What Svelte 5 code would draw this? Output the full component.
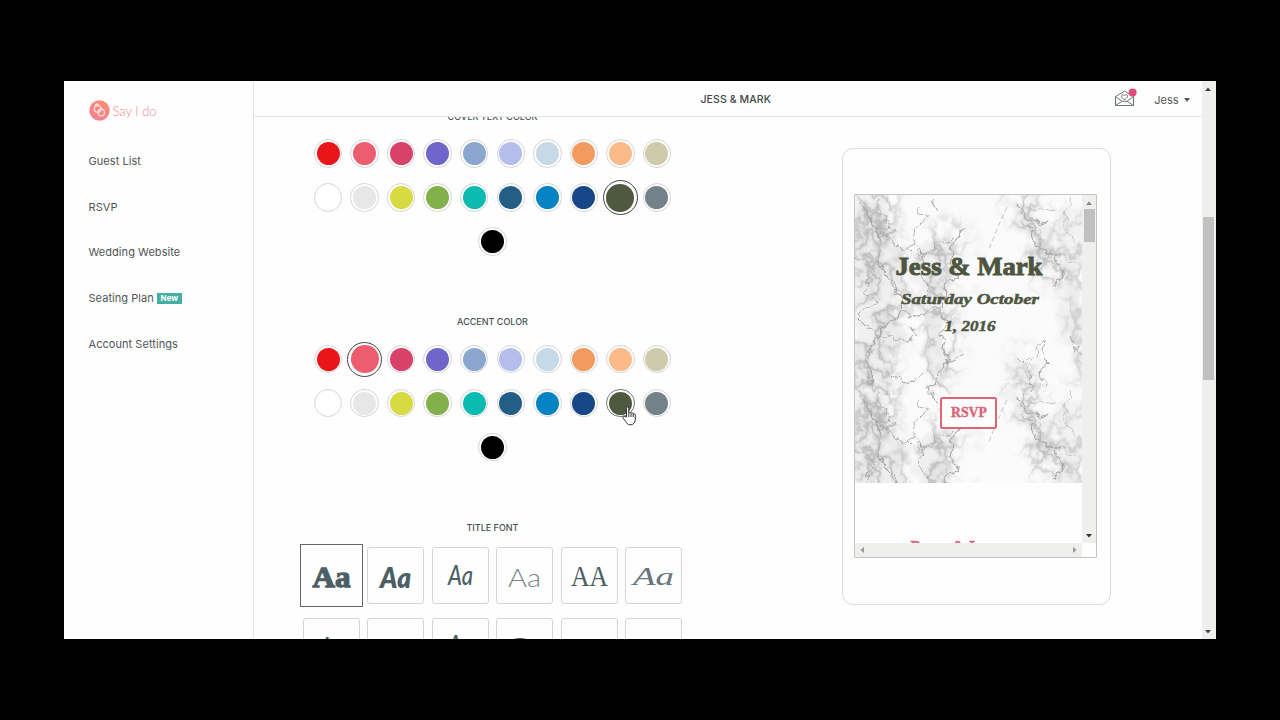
<script>
  const colors = [
    '#ea1518', '#ed5d70', '#d84268', '#6e66c8', '#8ba6cf', '#b4bdec', '#c6d9e6', '#f39a61', '#fbba87', '#cfcbaa',
    '#ffffff', '#e7e7e7', '#d8da42', '#84b04b', '#0bbab1', '#225e86', '#0583c3', '#184788', '#4e5940', '#738189',
    '#000000'
  ];
  const palettes = [
    { title: 'COVER TEXT COLOR', selected: 18, hover: -1 },
    { title: 'ACCENT COLOR', selected: 1, hover: 18 }
  ];
  const nav = [
    { label: 'Guest List' },
    { label: 'RSVP' },
    { label: 'Wedding Website' },
    { label: 'Seating Plan', badge: 'New' },
    { label: 'Account Settings' }
  ];
  const fonts = [
    { text: 'Aa', cls: 'deco', w: 38, y: 39, selected: true },
    { text: 'Aa', cls: 'brush', w: 31, y: 40 },
    { text: 'Aa', cls: 'hand', w: 25, y: 37 },
    { text: 'Aa', cls: 'thin', w: 33, y: 39 },
    { text: 'AA', cls: 'caps', w: 37, y: 38 },
    { text: 'Aa', cls: 'script', w: 41, y: 37 },
    { text: 'Aa', cls: 'hand', w: 24, y: 38 },
    { text: 'Aa', cls: 'script', w: 28, y: 37 },
    { text: 'Aa', cls: 'hand', w: 26, y: 36 },
    { text: 'Ca', cls: 'caps', w: 32, y: 38 },
    { text: 'Aa', cls: 'thin', w: 32, y: 42 },
    { text: 'Aa', cls: 'thin', w: 32, y: 42 }
  ];
</script>

{#snippet arrow(dir, color)}
  <svg class="arrow {dir}" width="6" height="4" viewBox="0 0 6 4"><path d="M0 4 3 .4 6 4Z" fill={color} /></svg>
{/snippet}

<div class="stage">
  <div class="app">
    <aside>
      <div class="logo">
        <svg width="21" height="21" viewBox="0 0 21 21">
          <defs>
            <linearGradient id="lg" x1="0" y1="1" x2="1" y2="0">
              <stop offset="0" stop-color="#f57fa0" /><stop offset="1" stop-color="#ff8d6a" />
            </linearGradient>
          </defs>
          <circle cx="10.5" cy="10.5" r="10.2" fill="url(#lg)" />
          <g fill="none" stroke="#ffe3dc" stroke-width="1.2">
            <circle cx="8.7" cy="9" r="3.3" />
            <circle cx="12.2" cy="12.4" r="3.3" />
            <path d="M6.800 6 6.400 4.800 8 4 9.300 4.600 9.200 5.800" />
          </g>
        </svg>
        <span>Say I do</span>
      </div>
      <nav>
        {#each nav as n}
          <a>{n.label}{#if n.badge}<b>{n.badge}</b>{/if}</a>
        {/each}
      </nav>
    </aside>

    <main>
      <header>
        <h1>JESS &amp; MARK</h1>
        <div class="user">
          <svg width="24" height="20" viewBox="0 0 24 20">
            <g fill="none" stroke="#6f7777" stroke-width="1">
              <path d="M1.5 8.5V17.5H19.5V8.5L10.5 3.2ZM1.5 8.5l6.500 4.800h5l6.500-4.800M1.5 17.5l6.500-4.200M19.5 17.5l-6.500-4.200" />
              <path d="M10.5 11.800C7.600 9.700 7.300 8.700 7.500 7.700c.4-1.400 2.300-1.400 3 0c.7-1.400 2.600-1.400 3 0c.2 1-.1 2-3 4.100Z" />
            </g>
            <circle cx="18.600" cy="4.500" r="4" fill="#e24d7b" />
          </svg>
          <span>Jess</span>
          <i></i>
        </div>
      </header>

      <div class="body">
        <section class="options">
          {#each palettes as p}
            <div class="group">
              <h2>{p.title}</h2>
              <div class="swatches">
                {#each colors as c, i}
                  <div class="cell">
                    <div class="swatch" class:selected={i === p.selected} class:hover={i === p.hover}>
                      <span style="background:{c}"></span>
                      {#if i === p.hover}
                        <svg class="cursor" width="15" height="20" viewBox="0 0 15 20">
                          <path d="M4.500 11V2.200c0-1.700 2.300-1.700 2.300 0V7c.5-.9 2-.7 2.200.3c.6-.8 2-.5 2.200.6c.8-.6 2.100-.1 2.100 1.200v4c0 3-1.500 5.700-4.800 5.700c-3 0-3.800-1.500-4.900-3.500L1 11.900c-.8-1.500.8-2.200 1.800-1.200ZM6.800 7v4M9 7.500V11M11.200 8v3" fill="#fff" stroke="#333" stroke-width="1" />
                        </svg>
                      {/if}
                    </div>
                  </div>
                {/each}
              </div>
            </div>
          {/each}
          <div class="group">
            <h2>TITLE FONT</h2>
            <div class="fonts">
              {#each fonts as f}
                <div class="card" class:selected={f.selected}>
                  <svg width="55" height="55" viewBox="0 0 55 55">
                    <text class={f.cls} x="27.500" y={f.y} text-anchor="middle" textLength={f.w} lengthAdjust="spacingAndGlyphs">{f.text}</text>
                  </svg>
                </div>
              {/each}
            </div>
          </div>
        </section>

        <section class="phone">
          <div class="screen">
            <svg class="page" width="227" height="348" viewBox="0 0 227 348">
              <defs>
                <filter id="rough" x="-10%" y="-10%" width="120%" height="120%">
                  <feTurbulence type="fractalNoise" baseFrequency=".07" numOctaves="3" seed="8" result="n" />
                  <feDisplacementMap in="SourceGraphic" in2="n" scale="18" xChannelSelector="R" yChannelSelector="G" />
                  <feGaussianBlur stdDeviation=".55" />
                </filter>
                <filter id="cloud" x="-10%" y="-10%" width="120%" height="120%">
                  <feTurbulence type="fractalNoise" baseFrequency=".06" numOctaves="4" seed="3" result="n" />
                  <feDisplacementMap in="SourceGraphic" in2="n" scale="34" xChannelSelector="R" yChannelSelector="G" />
                  <feGaussianBlur stdDeviation="1.500" />
                </filter>
                <filter id="veins" x="0" y="0" width="100%" height="100%" color-interpolation-filters="sRGB">
                  <feTurbulence type="fractalNoise" baseFrequency=".04 .034" numOctaves="4" seed="21" />
                  <feColorMatrix values="0 0 0 0 .6  0 0 0 0 .6  0 0 0 0 .6  1 0 0 0 0" />
                  <feComponentTransfer>
                    <feFuncA type="table" tableValues="0 0 0 0 0 0 .02 .06 .1 .25 .6 .2 .06 0 0 0 0 0 0 0 0" />
                  </feComponentTransfer>
                  <feGaussianBlur stdDeviation=".4" />
                  <feComposite in2="SourceAlpha" operator="in" />
                </filter>
                <filter id="soft" x="-50%" y="-50%" width="200%" height="200%"><feGaussianBlur stdDeviation="9" /></filter>
                <mask id="bands" maskUnits="userSpaceOnUse" x="0" y="-5" width="227" height="205">
                  <g filter="url(#soft)" fill="none" stroke="#fff" stroke-width="34">
                    <path d="M20-10 18 60 30 100 14 150 20 205" stroke-width="46" />
                    <path d="M102 30 75 70 80 110 88 150 78 205" />
                    <path d="M160-10 185 45 195 90" />
                    <path d="M222 20V190M165 150 172 205" stroke-width="16" />
                  </g>
                </mask>
                <clipPath id="hero"><path d="M0 0H227V288H0Z" /></clipPath>
                <g id="tile">
                  <g filter="url(#cloud)" fill="#f0f0f0">
                    <path d="M0 0H28L34 35 52 62 40 110 50 150 22 195H0Z" />
                    <path d="M62 60 104 25 94 66 86 120 98 165 76 195 70 130 52 96Z" />
                    <path d="M150 0 196 30 200 62 180 60 160 30Z" />
                    <path d="M204 10 227 10V185L206 130Z" opacity=".8" />
                    <path d="M150 158 172 165 176 195 160 195Z" />
                    <path d="M110 30 130 40 128 60ZM108 90 140 100 128 110Z" opacity=".6" />
                  </g>
                  <g filter="url(#cloud)" fill="none" stroke="#c8c8c8" stroke-width="6" opacity=".6">
                    <path d="M30 28 26 46 44 46M36 68 56 66M22 120 48 128M12 174 28 182M82 174 94 182M182 50 194 36M94 62 100 46" />
                  </g>
                  <path d="M0-5H227V200H0Z" filter="url(#veins)" mask="url(#bands)" />
                  <g filter="url(#rough)" transform="translate(1 1)" fill="none" stroke="#a9a9a9" stroke-width="1">
                    <path d="M5 8 18 30 26 42 20 62 32 78 44 100 46 118 28 132 12 158 14 190" stroke-width="1.500" />
                    <path d="M60 10 68 22 54 50 42 52 28 40 38 32 26 22 26 5M54 50 66 62 62 80 74 90 72 108" />
                    <path d="M4 60 18 75 8 95 20 108 4 118 14 135 36 145 60 140 50 125M32 175 48 188 66 182" />
                    <path d="M108 32 98 48 92 62 100 80 88 96 84 112 90 132 84 150 94 165 80 180 72 195" stroke-width="1.300" />
                    <path d="M62 62 82 50 96 40M84 112 64 122 44 118M94 165 112 158M76 0 82 14" />
                    <path d="M158 4 170 22 184 30 192 24M166 26 180 44 190 58 202 60 206 78 196 92" stroke-width="1.300" />
                    <path d="M172 10 200 14M184 44 186 30M204 60 216 64M216 0 208 22 220 50" opacity=".6" />
                    <path d="M172 165 190 145 186 195M160 160 176 176 172 195M216 155 226 148M214 140 224 162" />
                  </g>
                  <path d="M152 12 142 34 134 54" fill="none" stroke="#b8b8b8" stroke-width=".8" stroke-dasharray="5 3" />
                </g>
              </defs>
              <path d="M0 0H227V288H0Z" fill="#fafbfa" />
              <g clip-path="url(#hero)">
                <use href="#tile" />
                <use href="#tile" y="193" />
              </g>
              <g class="invite" text-anchor="middle">
                <text x="114" y="79.500" font-size="26" textLength="147" lengthAdjust="spacingAndGlyphs">Jess &amp; Mark</text>
                <text class="it" x="115" y="109" font-size="15" textLength="138" lengthAdjust="spacingAndGlyphs">Saturday October</text>
                <text class="it" x="115" y="135.500" font-size="15" textLength="51" lengthAdjust="spacingAndGlyphs">1, 2016</text>
                <rect x="86" y="203" width="55" height="30" rx="1.500" />
                <text class="rsvp" x="114" y="221.500" font-size="14" textLength="36" lengthAdjust="spacingAndGlyphs">RSVP</text>
                <text class="rsvp" x="94" y="361" font-size="23" textLength="77" lengthAdjust="spacingAndGlyphs">Bears &amp; Lo</text>
              </g>
            </svg>
            <div class="vbar">{@render arrow('up', '#888')}<span></span>{@render arrow('down', '#333')}</div>
            <div class="hbar">{@render arrow('left', '#999')}{@render arrow('right', '#999')}</div>
          </div>
        </section>
      </div>
    </main>

    <div class="scroll">{@render arrow('up', '#444')}<span></span>{@render arrow('down', '#444')}</div>
  </div>
</div>

<style>
  :global(body) { background: #000; }
  .stage { box-sizing: border-box; width: 1280px; height: 720px; padding: 81px 64px; background: #000; overflow: hidden; font-family: Inter, 'Open Sans', sans-serif; color: #4f5656; }
  .app { display: grid; grid-template-columns: 190px 1fr 14.500px; height: 558px; background: #fefefe; overflow: hidden; }
  aside { box-sizing: border-box; border-right: 1px solid #e4e4e4; padding: 19px 0 0 24.500px; }
  .logo { display: flex; align-items: center; gap: 3px; height: 21px; font-family: Lato, sans-serif; font-weight: 300; font-size: 13px; color: #f18b8b; white-space: nowrap; }
  nav { display: flex; flex-direction: column; margin-top: 17px; }
  nav a { display: flex; align-items: center; height: 45.700px; font-size: 11px; letter-spacing: .05px; white-space: nowrap; }
  nav b { margin: 2px 0 0 3px; width: 25px; height: 11px; line-height: 11px; background: #45b0a2; color: #fff; font-size: 8px; letter-spacing: 0; text-align: center; font-weight: 700; }
  main { display: flex; flex-direction: column; min-height: 0; min-width: 0; }
  header { box-sizing: border-box; display: grid; grid-template-columns: 1fr auto 1fr; align-items: center; height: 36px; flex: none; border-bottom: 1px solid #e6e6e6; padding: 2px 12px 0 28px; }
  h1 { grid-column: 2; margin: 0; font-size: 10.500px; letter-spacing: .1px; font-weight: 500; color: #3f4747; }
  .user { display: flex; justify-content: flex-end; align-items: center; font-size: 11px; }
  .user svg { margin: -3px 16px 0 0; }
  .user i { margin: 1px 0 0 5px; border: 3.500px solid transparent; border-top: 4px solid #555; border-bottom: 0; }
  .body { display: flex; align-items: flex-start; flex: 1; min-height: 0; overflow: hidden; }
  .options { width: 477px; flex: none; margin-top: -8.500px; display: flex; flex-direction: column; align-items: center; }
  .group { height: 205.700px; display: flex; flex-direction: column; align-items: center; }
  h2 { margin: 0; height: 15px; line-height: 15px; font-size: 9px; font-weight: 500; white-space: nowrap; color: #465252; }
  .swatches { display: flex; flex-wrap: wrap; justify-content: center; width: 366px; margin-top: 8px; }
  .cell { width: 36.550px; height: 44px; display: grid; place-items: center; }
  .swatch { position: relative; box-sizing: border-box; width: 28.500px; height: 28.500px; border: 1px solid #d6d6d6; border-radius: 50%; display: grid; place-items: center; }
  .swatch span { width: 23px; height: 23px; border-radius: 50%; }
  .swatch.hover { border-color: #777; }
  .swatch.selected { width: 35px; height: 35px; margin: -4px; border: 1.500px solid #444; }
  .swatch.selected span { width: 28px; height: 28px; }
  .cursor { position: absolute; left: 15px; top: 16px; }
  .fonts { display: grid; grid-template-columns: repeat(6, 57px); gap: 14px 7.600px; margin-top: 12.500px; }
  .card { box-sizing: border-box; width: 57px; height: 57px; border: 1px solid #d4d4d4; border-radius: 3px; }
  .card.selected { width: 63px; height: 63px; margin: -3px; border-color: #666; border-radius: 0; padding: 3px; }
  .card svg, .page { display: block; }
  .card text { fill: #4c5f66; font-family: 'Liberation Serif', serif; font-size: 29px; }
  .card .deco { font-weight: 700; stroke: #4c5f66; stroke-width: 1.300; font-size: 30px; }
  .card .brush { font-family: Lato, sans-serif; font-weight: 800; font-style: italic; font-size: 28px; }
  .card .hand { font-family: Lato, sans-serif; font-style: italic; font-size: 26px; font-weight: 500; }
  .card .thin { font-family: Lato, sans-serif; font-weight: 300; font-size: 26px; fill: #7a8488; }
  .card .script { font-style: italic; font-size: 26px; fill: #67767b; }
  .phone { box-sizing: border-box; width: 269px; height: 457px; margin: 31px 0 0 110.500px; border: 1.500px solid #dcdcdc; border-radius: 11px; padding: 45px 0 0 11.500px; }
  .screen { display: grid; grid-template: 348px 14px / 227px 14px; width: 241px; border: 1px solid #c4c4c4; border-radius: 1px; }
  .invite { font-family: 'Liberation Serif', serif; font-weight: 700; fill: #4d5540; stroke: #4d5540; stroke-width: .9; }
  .invite rect { fill: #fcfcfc; stroke: #dc6578; stroke-width: 2; }
  .invite .it { font-style: italic; stroke-width: .5; }
  .invite .rsvp { fill: #dc6578; stroke: #dc6578; stroke-width: .4; }
  .vbar, .hbar, .scroll { display: flex; align-items: center; background: #eff0ed; }
  .vbar, .scroll { flex-direction: column; }
  .vbar { padding: 6px 0 5px; }
  .vbar span { width: 11px; height: 33px; margin-top: 4px; background: #c0c0c0; }
  .hbar { justify-content: space-between; padding: 0 4px; }
  .scroll { padding: 6px 1px 5px 0; }
  .scroll span { width: 11px; height: 163px; margin-top: 126px; background: #c1c1c1; }
  .arrow { display: block; flex: none; }
  .down { transform: rotate(180deg); margin-top: auto; }
  .left { transform: rotate(-90deg); }
  .right { transform: rotate(90deg); }
</style>
